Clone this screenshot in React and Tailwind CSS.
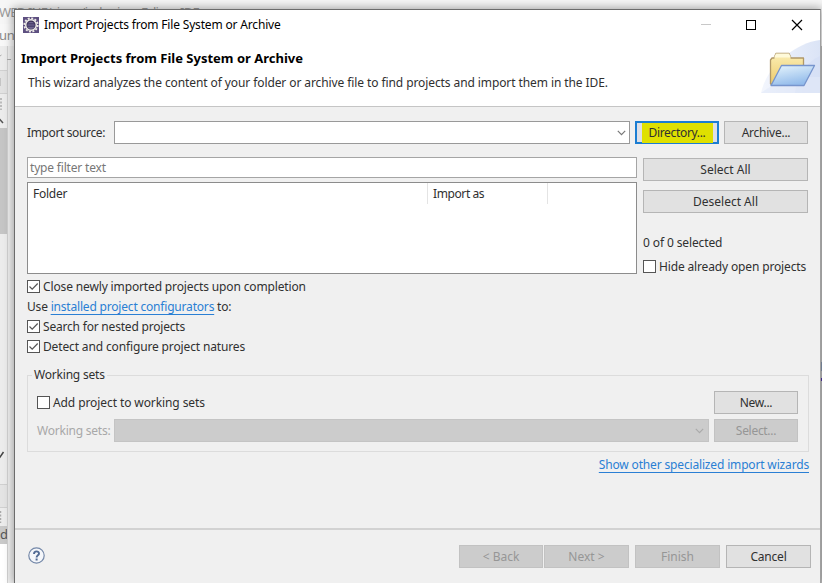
const cx = (...c) => c.filter(Boolean).join(" ");

function EclipseIcon() {
  return (
    <svg width="16" height="16" viewBox="0 0 16 16">
      <rect width="16" height="16" fill="#5d4f80" />
      <circle cx="8" cy="8" r="6.7" fill="none" stroke="#eeebe6" strokeWidth="1.8" strokeDasharray="2 1.508" />
      <circle cx="8" cy="8" r="5.3" fill="#3a2f55" stroke="#eeece8" strokeWidth="1.5" />
      <circle cx="8" cy="8.300" r="3.600" fill="#6f6690" />
      <path d="M4.500 6.500h7M4.200 8h7.600M4.500 9.500h7" stroke="#3f3563" strokeWidth=".7" />
    </svg>
  );
}

function FolderBanner() {
  return (
    <svg width="59" height="53" viewBox="0 0 59 53">
      <defs>
        <linearGradient id="sky" x1="0" y1="0" x2="1" y2="0">
          <stop offset="0" stopColor="#f3f6fd" />
          <stop offset="1" stopColor="#dbe4f6" />
        </linearGradient>
        <linearGradient id="back" x1="0" y1="0" x2="0" y2="1">
          <stop offset="0" stopColor="#fbeeb4" />
          <stop offset="1" stopColor="#edcb6c" />
        </linearGradient>
        <linearGradient id="front" x1="0" y1="0" x2=".4" y2="1">
          <stop offset="0" stopColor="#e8f6fd" />
          <stop offset="1" stopColor="#94bceb" />
        </linearGradient>
      </defs>
      <path d="M59 0C35 3 6 25 0 53H59Z" fill="url(#sky)" />
      <path d="M59 16C45 22 36 36 34 53H59Z" fill="#d3def5" opacity=".6" />
      <path d="M0 53C14 41 35 36 59 37V53Z" fill="#e2e9f8" opacity=".6" />
      <path d="M9.500 44V20l1.500-2h2l2-4.500h13l2 4.500h12.500v26Z" fill="url(#back)" stroke="#b09868" strokeWidth="1.300" strokeLinejoin="round" />
      <path d="M13 17.500l2-4h13l2 4Z" fill="#fffad9" />
      <path d="M10 45.500L20.500 25.500H53.500L43 45.500Z" fill="url(#front)" stroke="#7795cd" strokeWidth="1.300" strokeLinejoin="round" />
    </svg>
  );
}

function Chevron({ className }) {
  return (
    <svg width="9" height="6" viewBox="0 0 9 6" className={className}>
      <path d="M.8 .9L4.500 4.600L8.200 .9" fill="none" stroke="currentColor" strokeWidth="1.200" />
    </svg>
  );
}

function CheckBox({ checked, children, className, text }) {
  return (
    <label className={cx("flex items-center gap-[3px]", className)}>
      <span className="flex h-[13px] w-[13px] shrink-0 items-center justify-center border border-[#555] bg-white">
        {checked && (
          <svg width="11" height="11" viewBox="0 0 11 11">
            <path d="M1.500 5.500L4.200 8.200L9.700 2.500" fill="none" stroke="#555" strokeWidth="1.200" />
          </svg>
        )}
      </span>
      <span className={text}>{children}</span>
    </label>
  );
}

function Button({ children, className, disabled }) {
  return (
    <button
      className={cx(
        "flex shrink-0 items-center justify-center border",
        disabled ? "border-[#c2c2c2] bg-[#cccccc] text-[#969696]" : "border-[#b5b5b5] bg-[#e1e1e1]",
        className
      )}
    >
      {children}
    </button>
  );
}

function Workbench() {
  return (
    <div className="flex h-full w-full flex-col bg-[#f0f0f0] text-[#9a9a9a]">
      <div className="flex h-6 items-center bg-[#f6f6f6] text-[13px]">
        <span className="-ml-px tracking-[-0.75px]">WEB-INF/views/index.jsp - Eclipse IDE</span>
      </div>
      <div className="flex h-[22px] items-center bg-[#f8f8f8] pb-px text-[13px] text-[#8a8a8a]"><span className="-ml-px tracking-[-0.4px]">un</span></div>
      <div className="flex min-h-0 flex-1 justify-between">
        <div className="flex w-2 flex-col border-r border-[#d2d2d2] bg-[#ececec]">
          <div className="flex h-6 items-center">
            <svg width="14" height="8" viewBox="0 0 14 8" className="shrink-0">
              <path d="M0 2l1.500-1M7 5.500h4" stroke="#aaa" fill="none" />
            </svg>
          </div>
          <div className="flex h-6 items-center border-y border-[#d0d0d0] bg-[#e2e2e2]">
            <span className="h-2 w-px bg-[#c4c4c4]" />
          </div>
          <div className="h-[20px] pl-px">
            <svg width="2" height="12" viewBox="0 0 2 12" className="-ml-px mt-[4px]">
              <path d="M1 0v12" stroke="#aaa" strokeWidth="1.500" strokeDasharray="2 1.500" />
            </svg>
          </div>
          <svg width="5" height="14" viewBox="0 0 5 14">
            <path d="M-3 8L-.5 5L3 9" fill="none" stroke="#555" strokeWidth="1.500" />
          </svg>
          <div className="h-[106px] w-[7px] bg-[#c5c5c5]" />
          <div className="flex h-[250px] flex-col justify-end pb-[24px]">
            <svg width="5" height="10" viewBox="0 0 5 10">
              <path d="M-3 4L0 7L3.500 2" fill="none" stroke="#444" strokeWidth="1.500" />
            </svg>
          </div>
          <div className="h-6 border-y border-[#d0d0d0] bg-[#e4e4e4]" />
          <div className="h-[18px]">
            <svg width="2" height="12" viewBox="0 0 2 12" className="mt-[3px]">
              <path d="M.5 0v12" stroke="#aaa" strokeWidth="1.500" strokeDasharray="2 1.500" />
            </svg>
          </div>
          <div className="h-[18px] overflow-hidden bg-[#c9c9c9] text-[13px] leading-[17px] tracking-[-0.8px] text-[#555]">d]</div>
          <div className="flex-1 bg-white" />
        </div>
        <div className="flex w-px flex-col bg-[#c0c0c0] pt-[316px]">
          <div className="h-[9px] bg-[#8999b0]" />
          <div className="mt-[7px] h-[3px] bg-[#5130a5]" />
        </div>
      </div>
    </div>
  );
}

function TitleBar() {
  return (
    <div className="flex h-[30px] items-center bg-white pl-2">
      <EclipseIcon />
      <span className="ml-[5px] flex-1 tracking-[-0.17px] text-black">Import Projects from File System or Archive</span>
      <svg width="102" height="12" viewBox="0 0 102 12" className="mr-[17px]" shapeRendering="crispEdges">
        <path d="M0 5.500h10" stroke="#c8c8c8" />
        <rect x="45.500" y="1.500" width="9" height="9" fill="none" stroke="#000" />
        <path d="M91 1L101 11M101 1L91 11" stroke="#000" strokeWidth="1.200" shapeRendering="auto" />
      </svg>
    </div>
  );
}

function Header() {
  return (
    <div className="flex h-[67px] justify-between border-b border-[#c5c5c5] bg-white">
      <div className="flex flex-col pl-[6px] pt-[9px]">
        <div className="h-[18px] text-[13px] font-bold leading-[18px] text-black">Import Projects from File System or Archive</div>
        <div className="mt-[7px] h-[18px] pl-[7px] leading-[18px] tracking-[-0.092px]">
          This wizard analyzes the content of your folder or archive file to find projects and import them in the IDE.
        </div>
      </div>
      <FolderBanner />
    </div>
  );
}

function SourceRow() {
  return (
    <div className="flex h-[23px] items-center">
      <span className="w-[87px] shrink-0 tracking-[-0.37px]">Import source:</span>
      <div className="flex h-[23px] w-[516px] items-center justify-end border border-[#999] bg-white pr-[3px] text-[#777]">
        <Chevron />
      </div>
      <button className="ml-[5px] flex h-[23px] w-[84px] items-center justify-center border-2 border-[#1b7dd2] bg-[#dedfe6]">
        <span className="flex h-[20px] w-[71px] items-center justify-center bg-[#dfe000] tracking-[-0.33px]">Directory...</span>
      </button>
      <Button className="ml-[5px] h-[23px] w-[84px] tracking-[-0.25px]">Archive...</Button>
    </div>
  );
}

function ProjectPicker() {
  return (
    <div className="mt-[13px] flex h-[117px]">
      <div className="flex w-[610px] flex-col">
        <div className="flex h-[21px] items-center border border-[#a5a5a5] bg-white pl-[2px] pt-px tracking-[-0.18px] text-[#777]">type filter text</div>
        <div className="mt-[4px] h-[92px] border border-[#8c8c8c] bg-white">
          <div className="flex h-[21px] leading-[22px]">
            <div className="w-[400px] border-r border-[#e4e4e4] pl-[5px] tracking-[-0.25px]">Folder</div>
            <div className="w-[120px] border-r border-[#e4e4e4] pl-[5px] tracking-[-0.4px]">Import as</div>
          </div>
        </div>
      </div>
      <div className="ml-[6px] flex w-[165px] flex-col pt-px">
        <Button className="h-[23px]">Select All</Button>
        <Button className="mt-[9px] h-[23px]">Deselect All</Button>
        <span className="mt-[21px] h-[18px] leading-[18px] tracking-[-0.12px]">0 of 0 selected</span>
        <CheckBox className="mt-[6px] h-[17px] whitespace-nowrap" text="tracking-[-0.15px]">Hide already open projects</CheckBox>
      </div>
    </div>
  );
}

function WorkingSets() {
  return (
    <fieldset className="mt-[9px] h-[87px] w-[782px] border border-[#dcdcdc] px-[9px]">
      <legend className="-ml-[5px] h-[20px] px-[2px] leading-[20px] tracking-[-0.2px]">Working sets</legend>
      <div className="mt-[6px] flex h-[23px] items-center justify-between pr-px">
        <CheckBox text="tracking-[-0.09px]">Add project to working sets</CheckBox>
        <Button className="h-[23px] w-[84px] tracking-[-0.3px]">New...</Button>
      </div>
      <div className="mt-[5px] flex h-[23px] items-center">
        <span className="w-[77px] shrink-0 whitespace-nowrap tracking-[-0.22px] text-[#a8a8a8]">Working sets:</span>
        <div className="flex h-[23px] w-[595px] items-center justify-end border border-[#c4c4c4] bg-[#cccccc] pr-[4px] text-[#aaa]">
          <Chevron />
        </div>
        <Button disabled className="ml-[5px] h-[23px] w-[84px] tracking-[-0.3px]">Select...</Button>
      </div>
    </fieldset>
  );
}

const link = "text-[#2a7fd4] underline underline-offset-[3px]";

function ImportDialog() {
  return (
    <div className="absolute left-[14px] top-[9px] flex h-[574px] w-[807px] flex-col border-l border-r border-t border-[#6c6c6c] border-r-[#a0a0a0] bg-[#f0f0f0] shadow-[0_0_9px_1px_rgba(0,0,0,0.35)]">
      <TitleBar />
      <Header />
      <main className="flex h-[421px] flex-col pl-[12px] pt-[14px]">
        <SourceRow />
        <ProjectPicker />
        <CheckBox checked className="mt-[2px] h-5 pt-px" text="tracking-[-0.14px]">Close newly imported projects upon completion</CheckBox>
        <div className="h-5 leading-[21px] tracking-[-0.19px]">
          Use <a className={link}>installed project configurators</a> to:
        </div>
        <CheckBox checked className="h-5 pt-px" text="tracking-[-0.2px]">Search for nested projects</CheckBox>
        <CheckBox checked className="h-5 pt-px" text="tracking-[-0.14px]">Detect and configure project natures</CheckBox>
        <WorkingSets />
        <div className="mt-[3px] flex h-5 w-[782px] items-center justify-end">
          <a className={cx(link, "tracking-[-0.16px]")}>Show other specialized import wizards</a>
        </div>
      </main>
      <footer className="flex flex-1 items-start border-t-2 border-[#d2d2d2] pl-[12px] pt-[15px]">
        <svg width="18" height="18" viewBox="0 0 18 18" className="mt-[2px]">
          <circle cx="9.500" cy="8.500" r="7.700" fill="#f4f6fa" stroke="#7488a8" strokeWidth="1.200" />
          <path d="M7 6.900C7 3.600 12.200 3.700 12 6.600C11.900 8.300 9.600 8.300 9.600 10.400" fill="none" stroke="#526b94" strokeWidth="1.900" />
          <rect x="8.600" y="11.500" width="2" height="2" fill="#526b94" />
        </svg>
        <Button disabled className="ml-[414px] h-[23px] w-[84px]">&lt; Back</Button>
        <Button disabled className="ml-[1px] h-[23px] w-[85px]">Next &gt;</Button>
        <Button disabled className="ml-[6px] h-[23px] w-[85px]">Finish</Button>
        <Button className="ml-[6px] h-[23px] w-[85px] tracking-[-0.2px]">Cancel</Button>
      </footer>
    </div>
  );
}

export default function App() {
  return (
    <div className="relative h-[583px] w-[822px] overflow-hidden font-['Noto_Sans','Open_Sans',sans-serif] text-[12px] leading-[18px] text-[#303030]">
      <Workbench />
      <ImportDialog />
    </div>
  );
}
